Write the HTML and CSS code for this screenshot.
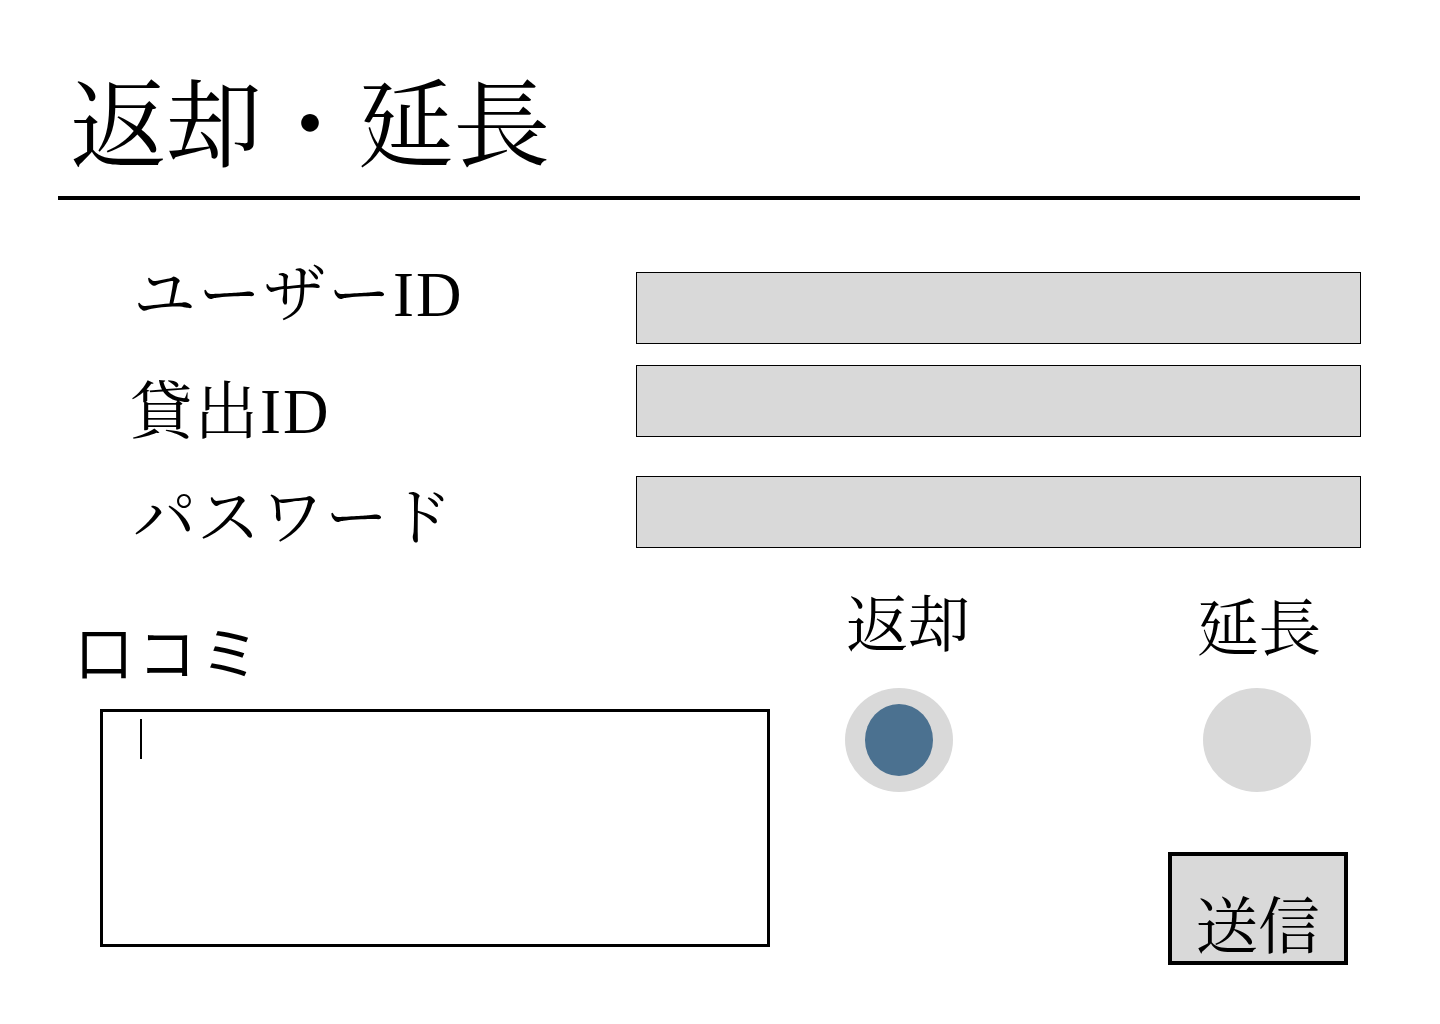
FILE: index.html
```html
<!DOCTYPE html>
<html lang="ja">
<head>
  <meta charset="UTF-8">
  <title>返却・延長</title>
  <link rel="stylesheet" href="styles.css">
</head>
<body>

  <h1 class="page-title">返却・延長</h1>

  <div class="form-rows">
    <div class="form-row">
      <label class="field-label label-user">ユーザーID</label>
      <div class="field-input"></div>
    </div>
    <div class="form-row">
      <label class="field-label label-loan">貸出ID</label>
      <div class="field-input"></div>
    </div>
    <div class="form-row row-pass">
      <label class="field-label label-pass">パスワード</label>
      <div class="field-input"></div>
    </div>
  </div>

  <div class="bottom-row">
    <div class="review">
      <div class="review-label">口コミ</div>
      <div class="review-box"><span class="caret"></span></div>
    </div>

    <div class="side">
      <div class="options">
        <div class="option">
          <div class="option-label">返却</div>
          <span class="radio checked"><span class="radio-dot"></span></span>
        </div>
        <div class="option option-extend">
          <div class="option-label">延長</div>
          <span class="radio"></span>
        </div>
      </div>
      <div class="submit-row">
        <button class="submit-button">送信</button>
      </div>
    </div>
  </div>

</body>
</html>
```

FILE: styles.css
```css
body {
  margin: 0;
  width: 1440px;
  height: 1024px;
  background: #fff;
  color: #000;
  font-family: 'Liberation Serif', 'Noto Serif CJK JP', 'Noto Sans CJK JP', serif;
  overflow: hidden;
}

.page-title {
  margin: 79px 0 0 58px;
  width: 1290px;
  padding: 0 0 21px 12px;
  border-bottom: 4px solid #000;
  font-size: 96px;
  font-weight: normal;
  line-height: 1;
}

.form-rows {
  margin-top: 72px;
  padding-left: 133px;
}

.form-row {
  display: flex;
  align-items: flex-start;
  height: 72px;
  margin-bottom: 21px;
}

.row-pass {
  margin-top: 39px;
}

.field-label {
  width: 503px;
  font-size: 63px;
  line-height: 1;
  letter-spacing: 2px;
}

.label-user {
  margin-top: -8px;
}

.label-loan {
  margin-top: 16px;
  margin-left: -3px;
  margin-right: 3px;
}

.label-pass {
  margin-top: 11px;
  letter-spacing: 1px;
}

.field-input {
  width: 723px;
  height: 70px;
  background: #d9d9d9;
  border: 1px solid #000;
}

.bottom-row {
  display: flex;
  margin-top: 43px;
}

.review {
  padding: 30px 0 0 75px;
}

.review-label {
  font-family: 'Noto Sans CJK JP', sans-serif;
  font-size: 58px;
  line-height: 1;
  letter-spacing: 5px;
}

.review-box {
  margin: 30px 0 0 25px;
  width: 664px;
  height: 232px;
  border: 3px solid #000;
  background: #fff;
}

.caret {
  display: block;
  width: 2px;
  height: 40px;
  margin: 7px 0 0 37px;
  background: #000;
}

.side {
  margin-left: 75px;
  width: 503px;
}

.options {
  display: flex;
}

.option {
  display: flex;
  flex-direction: column;
  width: 351px;
}

.option-extend {
  width: auto;
}

.option-label {
  font-size: 62px;
  line-height: 1;
  margin: 4px 0 0 1px;
}

.option-extend .option-label {
  margin-top: 8px;
}

.radio {
  display: flex;
  align-items: center;
  justify-content: center;
  width: 108px;
  height: 104px;
  margin-top: 31px;
  border-radius: 50%;
  background: #d9d9d9;
}

.option-extend .radio {
  margin-top: 27px;
  margin-left: 7px;
}

.radio-dot {
  width: 68px;
  height: 72px;
  border-radius: 50%;
  background: #4b7190;
}

.submit-row {
  display: flex;
  justify-content: flex-end;
  margin-top: 60px;
}

.submit-button {
  width: 180px;
  height: 113px;
  border: 4px solid #000;
  background: #d9d9d9;
  font-family: 'Liberation Serif', 'Noto Serif CJK JP', 'Noto Sans CJK JP', serif;
  font-size: 62px;
  line-height: 1;
  padding: 38px 0 0;
  color: #000;
}
```
